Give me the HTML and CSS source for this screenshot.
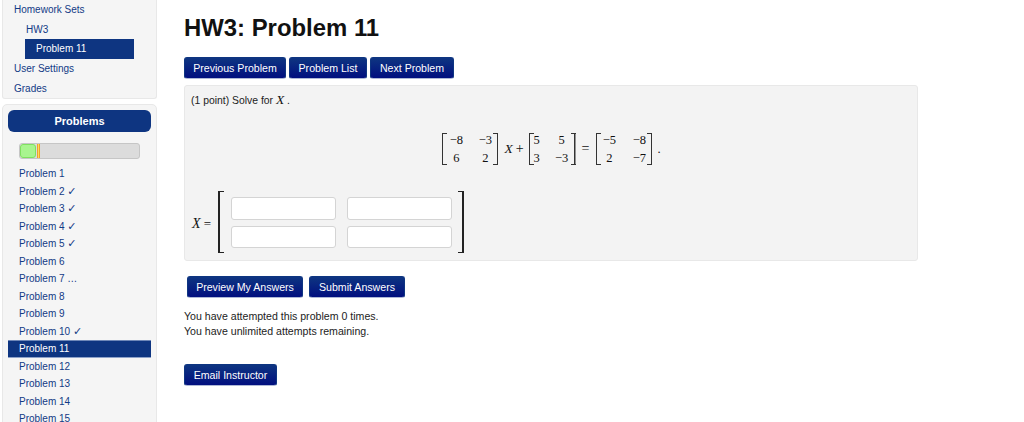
FILE: index.html
```html
<!DOCTYPE html>
<html lang="en">
<head>
<meta charset="utf-8">
<title>HW3: Problem 11</title>
<link rel="stylesheet" href="styles.css">
</head>
<body>
<div class="page">
  <aside class="sidebar">
    <nav class="panel site-nav">
      <a class="nav-item">Homework Sets</a>
      <a class="nav-item sub">HW3</a>
      <a class="nav-item current">Problem 11</a>
      <a class="nav-item">User Settings</a>
      <a class="nav-item">Grades</a>
    </nav>
    <nav class="panel problems">
      <h2 class="problems-title">Problems</h2>
      <div class="progress"><span class="progress-good"></span><span class="progress-mid"></span></div>
      <ul class="problem-list">
        <li>Problem 1</li>
        <li>Problem 2 <span class="check">✓</span></li>
        <li>Problem 3 <span class="check">✓</span></li>
        <li>Problem 4 <span class="check">✓</span></li>
        <li>Problem 5 <span class="check">✓</span></li>
        <li>Problem 6</li>
        <li>Problem 7 …</li>
        <li>Problem 8</li>
        <li>Problem 9</li>
        <li>Problem 10 <span class="check">✓</span></li>
        <li class="active">Problem 11</li>
        <li>Problem 12</li>
        <li>Problem 13</li>
        <li>Problem 14</li>
        <li>Problem 15</li>
      </ul>
    </nav>
  </aside>
  <main class="main">
    <h1 class="title">HW3: Problem 11</h1>
    <div class="btn-row">
      <a class="btn prev">Previous Problem</a>
      <a class="btn list">Problem List</a>
      <a class="btn next">Next Problem</a>
    </div>
    <section class="problem">
      <p class="prompt">(1 point) Solve for <i class="var">X</i> .</p>
      <div class="equation">
        <div class="matrix m1"><span>−8</span><span>−3</span><span>6</span><span>2</span></div>
        <i class="var eq-x">X</i><span class="op">+</span>
        <div class="matrix m2"><span>5</span><span>5</span><span>3</span><span>−3</span></div>
        <span class="op eq">=</span>
        <div class="matrix m3"><span>−5</span><span>−8</span><span>2</span><span>−7</span></div>
        <span class="dot">.</span>
      </div>
      <div class="answer">
        <span class="answer-label"><i class="var">X</i> =</span>
        <div class="answer-matrix">
          <input class="cell" type="text"><input class="cell" type="text">
          <input class="cell" type="text"><input class="cell" type="text">
        </div>
      </div>
    </section>
    <div class="btn-row submit-row">
      <a class="btn preview">Preview My Answers</a>
      <a class="btn submit">Submit Answers</a>
    </div>
    <p class="attempts">You have attempted this problem 0 times.<br>You have unlimited attempts remaining.</p>
    <a class="btn email">Email Instructor</a>
  </main>
</div>
</body>
</html>
```
FILE: styles.css
```css
* { box-sizing: border-box; }
html, body { margin: 0; height: 422px; overflow: hidden; background: #fff; }
body { font-family: "Liberation Sans", Arial, sans-serif; font-size: 10px; color: #222; }
.page { display: flex; align-items: flex-start; height: 422px; overflow: hidden; }

.sidebar { width: 155px; margin-left: 2px; flex: none; }
.panel { background: #f5f5f5; border: 1px solid #e8e8e8; }
.site-nav { height: 99px; border-top: 0; border-radius: 0 0 3px 3px; }
.nav-item { display: block; height: 19.5px; line-height: 19px; padding-left: 11px; color: #123a85; }
.nav-item.sub { padding-left: 23px; }
.nav-item.current { margin-left: 22px; width: 109px; height: 20px; line-height: 20px; padding-left: 11px; background: #0e3581; color: #fff; }

.problems { margin-top: 5px; height: 340px; padding: 5px; border-radius: 5px 5px 0 0; }
.problems-title { margin: 0; height: 22px; line-height: 22px; background: #0e3581; color: #fff; font-size: 11px; font-weight: bold; text-align: center; border-radius: 6px; }
.progress { display: flex; width: 121px; height: 16px; margin: 11px 0 0 11px; background: #dcdcdc; border: 1px solid #c6c6c6; border-radius: 3px; overflow: hidden; }
.progress-good { width: 16px; background: #a8f58f; border: 1px solid #7fe060; border-radius: 3px; }
.progress-mid { width: 3px; margin-left: 1px; background: #f7df5a; border: 1px solid #f0a030; border-width: 0 1px; }
.problem-list { list-style: none; margin: 6px 0 0; padding: 0; }
.problem-list li { height: 17.5px; line-height: 17.5px; padding-left: 11px; color: #123a85; white-space: nowrap; }
.problem-list li.active { background: #0e3581; color: #fff; border-top: 1px solid #6f88b8; border-bottom: 1px solid #8ea2c9; line-height: 15.5px; }
.check { font-family: "DejaVu Sans", sans-serif; font-size: 11px; line-height: 1; }

.main { margin-left: 27px; width: 734px; flex: none; }
.title { margin: 14px 0 0; height: 28px; line-height: 28px; font-size: 23.9px; font-weight: bold; color: #111; }
.btn-row { display: flex; gap: 3px; margin-top: 15px; }
.btn { display: inline-block; height: 22px; line-height: 21px; padding: 0; font-size: 10.6px; color: #fff; text-align: center; border-radius: 3px; background: linear-gradient(#0e3581, #010f7f); border: 1px solid #0e3581; border-bottom-color: #aeb8d6; white-space: nowrap; }
.prev { width: 102px; } .list { width: 78px; } .next { width: 84px; }

.problem { margin-top: 6px; height: 176px; padding: 7px 6px 0; background: #f3f3f3; border: 1px solid #e8e8e8; border-radius: 3px; color: #222; }
.prompt { margin: 0; height: 14px; line-height: 14px; font-size: 10.4px; }
.var { font-family: "Liberation Serif", serif; font-style: italic; font-size: 13.5px; color: #111; }
.equation { display: flex; align-items: center; justify-content: center; height: 32px; margin-top: 26px; padding-left: 1px; font-family: "Liberation Serif", serif; font-size: 12.5px; color: #111; }
.matrix { display: grid; height: 32px; justify-content: start; align-content: center; background:
  linear-gradient(#333,#333) 0 0/1px 100% no-repeat,
  linear-gradient(#333,#333) 0 0/5px 1px no-repeat,
  linear-gradient(#333,#333) 0 100%/5px 1px no-repeat,
  linear-gradient(#333,#333) 100% 0/1.5px 100% no-repeat,
  linear-gradient(#333,#333) 100% 0/5px 1px no-repeat,
  linear-gradient(#333,#333) 100% 100%/5px 1px no-repeat; }
.m1 { width: 56px; grid-template-columns: 28px 30px; }
.m2 { width: 47px; grid-template-columns: 16px 34px; }
.m3 { width: 56px; grid-template-columns: 26px 34px; }
.matrix span { height: 18px; line-height: 18px; text-align: center; }
.eq-x { margin-left: 6px; }
.op { margin: 0 5px 0 3px; font-size: 14px; }
.op.eq { margin: 0 7px 0 6px; }
.dot { margin-left: 5px; }
.answer { display: flex; align-items: center; margin: 26px 0 0 1px; }
.answer-label { width: 26px; padding-top: 3px; font-family: "Liberation Serif", serif; font-size: 13px; color: #111; white-space: nowrap; }
.answer-label .var { font-size: 14px; }
.answer-matrix { display: grid; grid-template-columns: 105px 105px; column-gap: 11px; row-gap: 6px; width: 246px; height: 62px; padding: 6px 12px 0 13px; align-content: start; background:
  linear-gradient(#222,#222) 0 0/2px 100% no-repeat,
  linear-gradient(#222,#222) 0 0/6px 1px no-repeat,
  linear-gradient(#222,#222) 0 100%/6px 1px no-repeat,
  linear-gradient(#222,#222) 100% 0/2px 100% no-repeat,
  linear-gradient(#222,#222) 100% 0/6px 1px no-repeat,
  linear-gradient(#222,#222) 100% 100%/6px 1px no-repeat; }
.cell { width: 105px; height: 22.5px; margin: 0; padding: 0; background: #fff; border: 1px solid #d4d4d4; border-radius: 3px; }

.submit-row { margin: 15px 0 0 3px; gap: 6px; }
.preview { width: 116px; } .submit { width: 96px; }
.attempts { margin: 11px 0 0; line-height: 15px; font-size: 10.6px; color: #222; }
.email { display: block; width: 93px; margin-top: 25px; }
```
